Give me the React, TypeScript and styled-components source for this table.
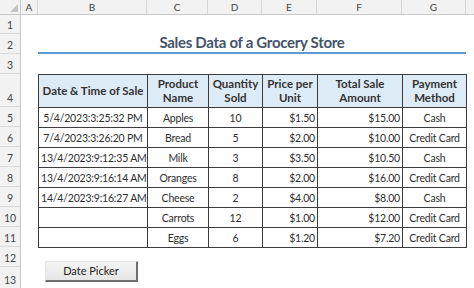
import React from "react";
import styled, { createGlobalStyle } from "styled-components";

interface Sale {
  date: string;
  product: string;
  qty: number;
  price: string;
  total: string;
  method: string;
}

const sales: Sale[] = [
  { date: "5/4/2023:3:25:32 PM", product: "Apples", qty: 10, price: "$1.50", total: "$15.00", method: "Cash" },
  { date: "7/4/2023:3:26:20 PM", product: "Bread", qty: 5, price: "$2.00", total: "$10.00", method: "Credit Card" },
  { date: "13/4/2023:9:12:35 AM", product: "Milk", qty: 3, price: "$3.50", total: "$10.50", method: "Cash" },
  { date: "13/4/2023:9:16:14 AM", product: "Oranges", qty: 8, price: "$2.00", total: "$16.00", method: "Credit Card" },
  { date: "14/4/2023:9:16:27 AM", product: "Cheese", qty: 2, price: "$4.00", total: "$8.00", method: "Cash" },
  { date: "", product: "Carrots", qty: 12, price: "$1.00", total: "$12.00", method: "Credit Card" },
  { date: "", product: "Eggs", qty: 6, price: "$1.20", total: "$7.20", method: "Credit Card" },
];

const columns = [
  { name: "A", width: 17 },
  { name: "B", width: 109 },
  { name: "C", width: 61 },
  { name: "D", width: 54 },
  { name: "E", width: 55 },
  { name: "F", width: 85 },
  { name: "G", width: 64 },
  { name: "", width: 40 },
];

const rowHeights = [19, 20, 20, 33, 20, 20, 20, 20, 20, 20, 20, 20, 22];

const GlobalStyle = createGlobalStyle`
  html, body {
    margin: 0;
    padding: 0;
    background: #ffffff;
  }
  body {
    font-family: Lato, "Liberation Sans", sans-serif;
  }
`;

const Sheet = styled.div`
  width: 474px;
  height: 288px;
  overflow: hidden;
  display: flex;
  flex-direction: column;
  background: #fff;
`;

const ColHeaderRow = styled.div`
  display: flex;
  height: 15px;
  flex-shrink: 0;
  background: #f2f2f2;
  border-bottom: 1px solid #c8c8c8;
  box-sizing: border-box;
`;

const Corner = styled.div`
  width: 21px;
  flex-shrink: 0;
  position: relative;
  border-right: 1px solid #c8c8c8;
  box-sizing: border-box;

  &::after {
    content: "";
    position: absolute;
    right: 2px;
    bottom: 2px;
    border-style: solid;
    border-width: 0 0 8px 8px;
    border-color: transparent transparent #c4c4c4 transparent;
  }
`;

const ColLabel = styled.div<{ $w: number }>`
  width: ${(p) => p.$w}px;
  flex-shrink: 0;
  border-right: 1px solid #d6d6d6;
  box-sizing: border-box;
  display: flex;
  align-items: center;
  justify-content: center;
  font-size: 10px;
  color: #444;
`;

const Body = styled.div`
  display: flex;
  flex: 1;
`;

const RowHeaders = styled.div`
  width: 21px;
  flex-shrink: 0;
  display: flex;
  flex-direction: column;
  background: #f2f2f2;
  border-right: 1px solid #c8c8c8;
  box-sizing: border-box;
`;

const RowLabel = styled.div<{ $h: number }>`
  height: ${(p) => p.$h}px;
  flex-shrink: 0;
  box-sizing: border-box;
  border-bottom: 1px solid #dadada;
  display: flex;
  align-items: flex-end;
  justify-content: center;
  padding-bottom: 2px;
  font-size: 10.5px;
  color: #444;
`;

const Content = styled.div`
  padding-left: 17px;
  display: flex;
  flex-direction: column;
`;

const Spacer = styled.div<{ $h: number }>`
  height: ${(p) => p.$h}px;
  flex-shrink: 0;
`;

const Title = styled.div`
  width: 428px;
  height: 20px;
  box-sizing: border-box;
  border-bottom: 2px solid #5b9bd5;
  display: flex;
  align-items: flex-end;
  justify-content: center;
  padding-bottom: 1px;
  font-size: 15px;
  letter-spacing: -0.3px;
  font-weight: 700;
  color: #44546a;
`;

const Table = styled.table`
  border-collapse: collapse;
  width: 428px;
  table-layout: fixed;
  font-size: 10.5px;
  letter-spacing: -0.2px;
  color: #2e2e2e;
`;

const HeadCell = styled.th`
  height: 32px;
  padding: 0 1px;
  background: #ddebf7;
  border: 1px solid #3c3c3c;
  font-size: 11.5px;
  letter-spacing: 0;
  font-weight: 700;
  line-height: 14px;
  text-align: center;
  color: #333;
  white-space: nowrap;
`;

const Cell = styled.td<{ $align?: string }>`
  height: 19px;
  padding: 0 2px;
  border: 1px solid #3c3c3c;
  text-align: ${(p) => p.$align || "center"};
  white-space: nowrap;
  overflow: hidden;
`;

const ButtonRow = styled.div`
  padding: 11px 0 0 7px;
`;

const Button = styled.button`
  width: 93px;
  height: 21px;
  box-sizing: border-box;
  background: linear-gradient(#f4f4f4, #e6e6e6);
  border: 1px solid #e2e2e2;
  border-right: 2px solid #6e6e6e;
  border-bottom: 2px solid #6e6e6e;
  font-family: Lato, "Liberation Sans", sans-serif;
  font-size: 11px;
  color: #222;
  padding: 0;
`;

export default function App() {
  const widths = [109, 61, 54, 55, 85, 64];
  return (
    <>
      <GlobalStyle />
      <Sheet>
        <ColHeaderRow>
          <Corner />
          {columns.map((c, i) => (
            <ColLabel key={i} $w={c.width}>
              {c.name}
            </ColLabel>
          ))}
        </ColHeaderRow>
        <Body>
          <RowHeaders>
            {rowHeights.map((h, i) => (
              <RowLabel key={i} $h={h}>
                {i + 1}
              </RowLabel>
            ))}
          </RowHeaders>
          <Content>
            <Spacer $h={19} />
            <Title>Sales Data of a Grocery Store</Title>
            <Spacer $h={20} />
            <Table>
              <colgroup>
                {widths.map((w, i) => (
                  <col key={i} style={{ width: w }} />
                ))}
              </colgroup>
              <thead>
                <tr>
                  <HeadCell>Date &amp; Time of Sale</HeadCell>
                  <HeadCell>
                    Product
                    <br />
                    Name
                  </HeadCell>
                  <HeadCell>
                    Quantity
                    <br />
                    Sold
                  </HeadCell>
                  <HeadCell>
                    Price per
                    <br />
                    Unit
                  </HeadCell>
                  <HeadCell>
                    Total Sale
                    <br />
                    Amount
                  </HeadCell>
                  <HeadCell>
                    Payment
                    <br />
                    Method
                  </HeadCell>
                </tr>
              </thead>
              <tbody>
                {sales.map((s, i) => (
                  <tr key={i}>
                    <Cell>{s.date}</Cell>
                    <Cell>{s.product}</Cell>
                    <Cell>{s.qty}</Cell>
                    <Cell $align="right">{s.price}</Cell>
                    <Cell $align="right">{s.total}</Cell>
                    <Cell>{s.method}</Cell>
                  </tr>
                ))}
              </tbody>
            </Table>
            <ButtonRow>
              <Button>Date Picker</Button>
            </ButtonRow>
          </Content>
        </Body>
      </Sheet>
    </>
  );
}
